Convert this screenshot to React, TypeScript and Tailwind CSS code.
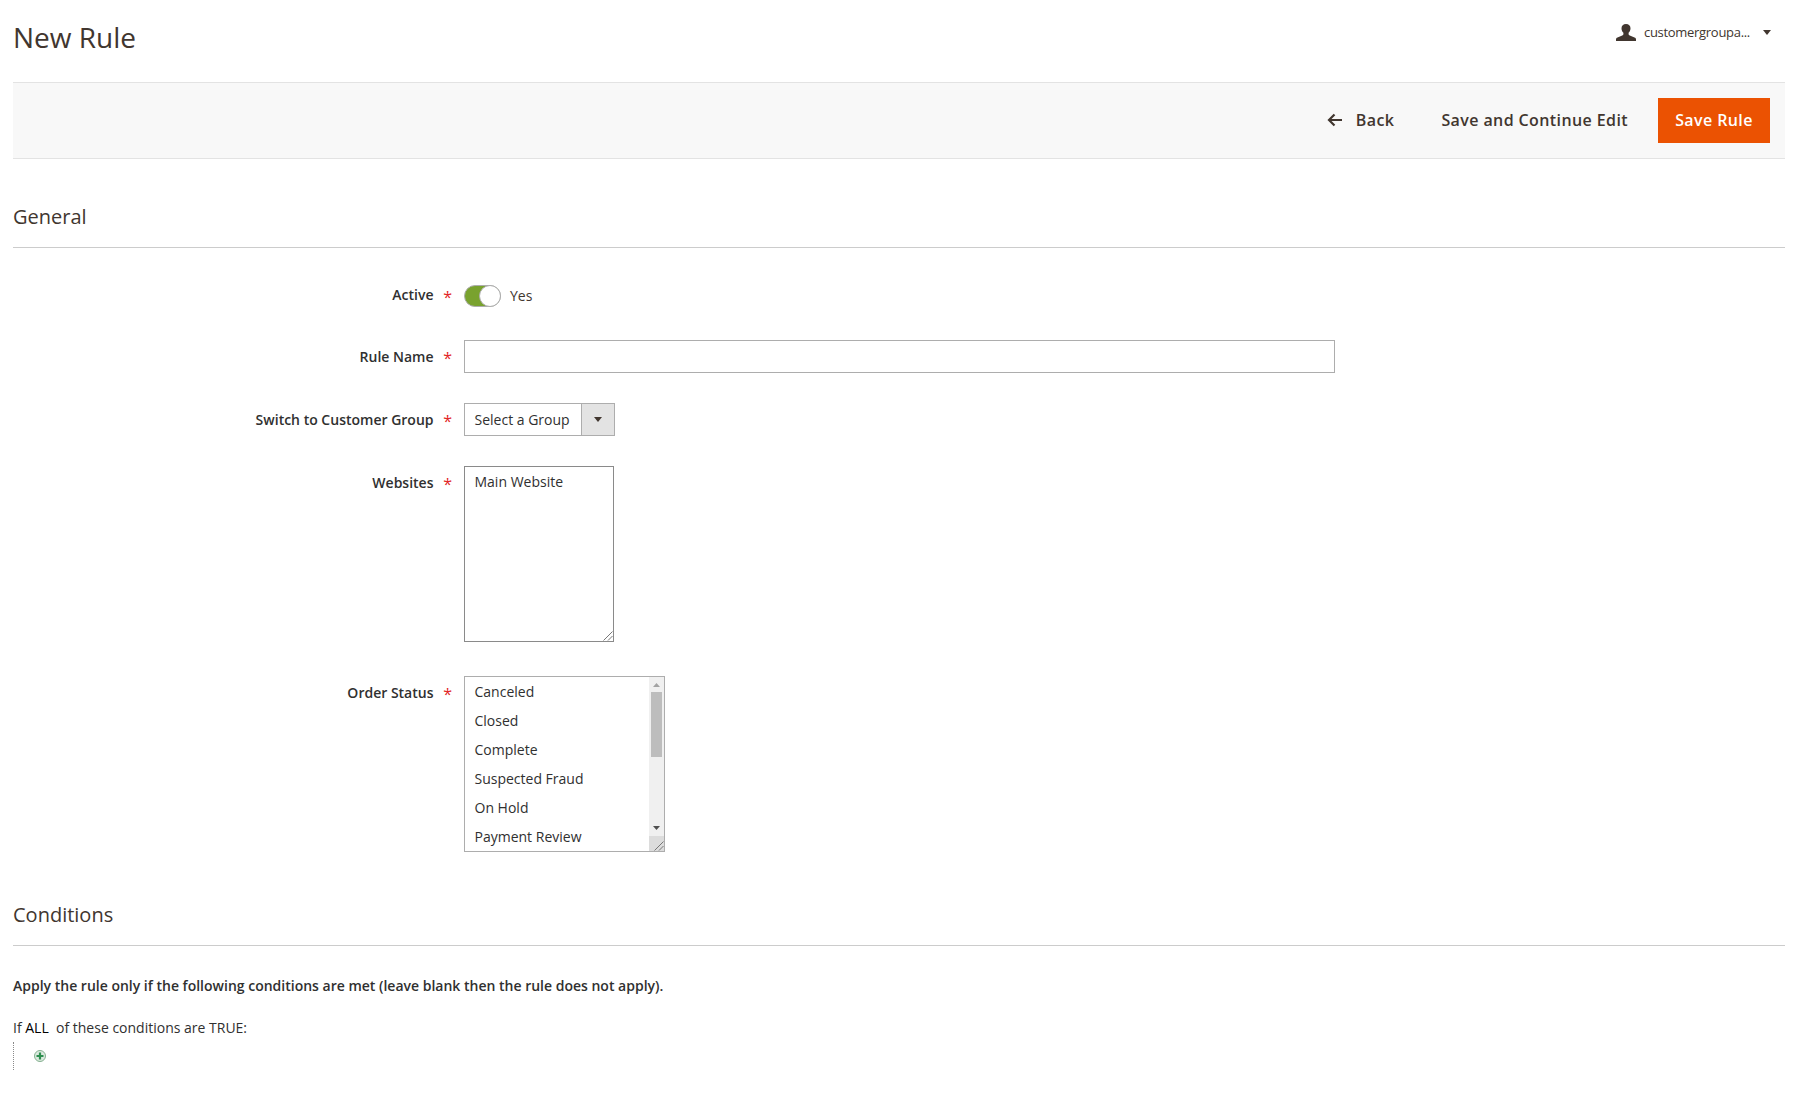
import React from "react";

const FONT = "font-['Open_Sans',sans-serif]";

function Grip({ className = "" }: { className?: string }) {
  return (
    <svg width="11" height="11" viewBox="0 0 11 11" className={className}>
      <path d="M10.500 1.500 L1.500 10.500 M10.500 6 L6 10.500" stroke="#777" strokeWidth="1" fill="none" />
    </svg>
  );
}

function Row({ label, className = "", lead = "leading-[33px]", children }: { label: string; className?: string; lead?: string; children: React.ReactNode }) {
  return (
    <div className={`flex ${className}`}>
      <div className={`w-[420.500px] shrink-0 text-right text-[14px] font-semibold text-[#303030] ${lead}`}>{label}</div>
      <div className={`-mb-[2px] w-[30.500px] shrink-0 pt-[2px] pr-[2px] text-center text-[16px] font-normal text-[#e22626] ${lead}`}>*</div>
      {children}
    </div>
  );
}

const statuses = ["Canceled", "Closed", "Complete", "Suspected Fraud", "On Hold", "Payment Review"];

export default function App() {
  return (
    <div className={`${FONT} h-[1118px] overflow-hidden bg-white pr-[20px] pl-[13px] text-[14px] text-[#303030]`}>
      <header className="flex h-[82px] items-center justify-between">
        <h1 className="-mt-[8px] text-[28px] leading-none font-normal text-[#41362f]">New Rule</h1>
        <div className="-mt-[17px] flex items-center pr-[14px]">
          <svg width="20" height="17" viewBox="0 0 20 17" fill="#41362f">
            <path d="M10 0c-2.800 0-4.500 1.700-4.500 4.300 0 2 .9 3.600 1.900 4.500v1.500c0 .5-.6.9-1.200 1.100L1.500 13.500C.5 13.900 0 14.500 0 15.500V17h20v-1.500c0-1-.5-1.600-1.500-2l-4.700-2.100c-.6-.2-1.200-.6-1.200-1.100V8.800c1-.9 1.900-2.500 1.900-4.500C14.500 1.700 12.800 0 10 0z" />
          </svg>
          <span className="ml-[8px] w-[106px] text-[13px] leading-none tracking-[-0.3px] whitespace-nowrap text-[#41362f]">customergroupa...</span>
          <svg width="8" height="5" viewBox="0 0 8 5" className="ml-[13px]" fill="#41362f"><path d="M0 0h8L4 5z" /></svg>
        </div>
      </header>

      <div className="flex h-[77px] items-center justify-end border-y border-[#e3e3e3] bg-[#f8f8f8] pr-[15px]">
        <svg width="16" height="14" viewBox="0 0 16 14" fill="none" stroke="#41362f" strokeWidth="2.200" className="-mt-[1px]">
          <path d="M15 7H2M7.500 1.500 2 7l5.500 5.500" />
        </svg>
        <span className="-mt-[2px] ml-[13px] text-[16px] font-semibold tracking-[0.4px] text-[#41362f]">Back</span>
        <span className="-mt-[2px] ml-[47px] text-[16px] font-semibold tracking-[0.4px] text-[#41362f]">Save and Continue Edit</span>
        <button className="ml-[30px] flex h-[45px] w-[112px] items-center justify-center bg-[#eb5202] pb-[2px] text-[16px] font-semibold tracking-[0.4px] text-white">Save Rule</button>
      </div>

      <section>
        <div className="flex h-[89px] items-end border-b border-[#cccccc] pb-[16px] text-[20px] leading-[28px] font-normal text-[#41362f]">General</div>

        <Row label="Active" className="mt-[37px] h-[22px] items-start" lead="leading-[20px]">
          <div className="flex h-[22px] items-center">
            <div className="flex h-[22px] w-[37px] justify-end rounded-full border border-[#adadad] bg-[#79a22e]">
              <div className="-my-[1px] -mr-[1px] h-[22px] w-[22px] rounded-full border border-[#adadad] bg-white" />
            </div>
            <span className="-mt-[1px] ml-[9px] text-[14px] text-[#41362f]">Yes</span>
          </div>
        </Row>

        <Row label="Rule Name" className="mt-[33px]">
          <div className="h-[33px] w-[871px] border border-[#adadad] bg-white" />
        </Row>

        <Row label="Switch to Customer Group" className="mt-[30px]">
          <div className="flex h-[33px] w-[151px] border border-[#adadad] bg-white">
            <div className="flex-1 pl-[9.500px] text-[14px] leading-[31px] text-[#303030]">Select a Group</div>
            <div className="flex w-[33px] items-center justify-center border-l border-[#adadad] bg-[#e3e3e3]">
              <svg width="8" height="5" viewBox="0 0 8 5" fill="#41362f"><path d="M0 0h8L4 5z" /></svg>
            </div>
          </div>
        </Row>

        <Row label="Websites" className="mt-[30px]">
          <div className="relative h-[176px] w-[150px] border border-[#8a8a8a] bg-white pl-[9.500px] text-[14px] leading-[29px] text-[#303030]">
            Main Website
            <Grip className="absolute right-0 bottom-0" />
          </div>
        </Row>

        <Row label="Order Status" className="mt-[34px]">
          <div className="flex h-[176px] w-[201px] border border-[#adadad] bg-white">
            <ul className="flex-1 overflow-hidden pl-[9.500px] text-[14px] leading-[29px] text-[#303030]">
              {statuses.map((s) => (
                <li key={s}>{s}</li>
              ))}
            </ul>
            <div className="flex w-[15px] flex-col bg-[#f0f0f0]">
              <div className="flex h-[15px] items-center justify-center">
                <svg width="7" height="4" viewBox="0 0 7 4" fill="#a3a3a3"><path d="M0 4h7L3.500 0z" /></svg>
              </div>
              <div className="mx-auto h-[65px] w-[11px] bg-[#bdbdbd]" />
              <div className="flex flex-1 items-end justify-center pb-[6px]">
                <svg width="7" height="4" viewBox="0 0 7 4" fill="#505050"><path d="M0 0h7L3.500 4z" /></svg>
              </div>
              <div className="flex h-[15px] items-end justify-end bg-[#dcdcdc]">
                <Grip />
              </div>
            </div>
          </div>
        </Row>
      </section>

      <section>
        <div className="mt-[46px] flex h-[48px] items-end border-b border-[#cccccc] pb-[16px] text-[20px] leading-[28px] font-normal text-[#41362f]">Conditions</div>
        <p className="mt-[30px] text-[14px] leading-[20px] font-semibold text-[#303030]">Apply the rule only if the following conditions are met (leave blank then the rule does not apply).</p>
        <p className="mt-[22px] text-[14px] leading-[20px] text-[#303030]">
          If <span className="text-black">ALL</span>&nbsp; of these conditions are TRUE:
        </p>
        <div className="mt-[4px] flex h-[28px] items-center border-l border-dotted border-[#8a8a8a] pl-[20px]">
          <svg width="12" height="12" viewBox="0 0 12 12">
            <circle cx="6" cy="6" r="5.500" fill="#dbe9de" stroke="#84b090" />
            <path d="M6 2.500v7M2.500 6h7" stroke="#2f8f50" strokeWidth="2.200" />
          </svg>
        </div>
      </section>
    </div>
  );
}
